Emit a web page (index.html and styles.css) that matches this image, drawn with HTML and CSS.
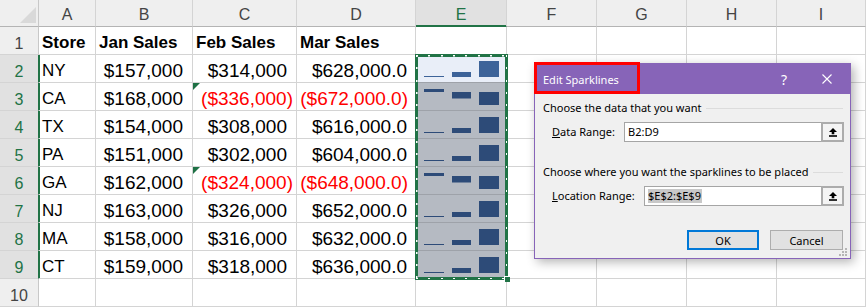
FILE: index.html
```html
<!DOCTYPE html>
<html>
<head>
<meta charset="utf-8">
<title>Edit Sparklines</title>
<link rel="stylesheet" href="styles.css">
</head>
<body>
<div class="app">
  <div class="sheet">
    <div class="corner"><svg width="16" height="16" viewBox="0 0 16 16"><polygon points="16,0 16,16 0,16" fill="#d9d9d9"/></svg></div>
    <div class="ch">A</div><div class="ch">B</div><div class="ch">C</div><div class="ch">D</div><div class="ch on">E</div><div class="ch">F</div><div class="ch">G</div><div class="ch">H</div><div class="ch">I</div>

    <div class="rh">1</div>
    <div class="c h">Store</div><div class="c h">Jan Sales</div><div class="c h">Feb Sales</div><div class="c h">Mar Sales</div>
    <div class="c"></div><div class="c"></div><div class="c"></div><div class="c"></div><div class="c"></div>

    <div class="rh on">2</div>
    <div class="c">NY</div><div class="c n pb">$157,000</div><div class="c n pc">$314,000</div><div class="c n pd">$628,000.0</div>
    <div class="c sp act"><svg width="90" height="27" viewBox="0 0 90 27"><g fill="#3d6399"><rect x="8" y="21" width="20" height="1"/><rect x="36" y="17" width="19" height="5"/><rect x="63" y="6" width="20" height="16"/></g></svg></div>
    <div class="c"></div><div class="c"></div><div class="c"></div><div class="c"></div>

    <div class="rh on">3</div>
    <div class="c">CA</div><div class="c n pb">$168,000</div><div class="c n pcn neg err">($336,000)</div><div class="c n pdn neg">($672,000.0)</div>
    <div class="c sp"><svg width="90" height="27" viewBox="0 0 90 27"><g fill="#2d4b78"><rect x="8" y="6" width="20" height="3"/><rect x="36" y="9" width="19" height="6.5"/><rect x="63" y="9" width="20" height="13"/></g></svg></div>
    <div class="c"></div><div class="c"></div><div class="c"></div><div class="c"></div>

    <div class="rh on">4</div>
    <div class="c">TX</div><div class="c n pb">$154,000</div><div class="c n pc">$308,000</div><div class="c n pd">$616,000.0</div>
    <div class="c sp"><svg width="90" height="27" viewBox="0 0 90 27"><g fill="#2d4b78"><rect x="8" y="21" width="20" height="1"/><rect x="36" y="17" width="19" height="5"/><rect x="63" y="6" width="20" height="16"/></g></svg></div>
    <div class="c"></div><div class="c"></div><div class="c"></div><div class="c"></div>

    <div class="rh on">5</div>
    <div class="c">PA</div><div class="c n pb">$151,000</div><div class="c n pc">$302,000</div><div class="c n pd">$604,000.0</div>
    <div class="c sp"><svg width="90" height="27" viewBox="0 0 90 27"><g fill="#2d4b78"><rect x="8" y="21" width="20" height="1"/><rect x="36" y="17" width="19" height="5"/><rect x="63" y="6" width="20" height="16"/></g></svg></div>
    <div class="c"></div><div class="c"></div><div class="c"></div><div class="c"></div>

    <div class="rh on">6</div>
    <div class="c">GA</div><div class="c n pb">$162,000</div><div class="c n pcn neg err">($324,000)</div><div class="c n pdn neg">($648,000.0)</div>
    <div class="c sp"><svg width="90" height="27" viewBox="0 0 90 27"><g fill="#2d4b78"><rect x="8" y="6" width="20" height="3"/><rect x="36" y="9" width="19" height="6.5"/><rect x="63" y="9" width="20" height="13"/></g></svg></div>
    <div class="c"></div><div class="c"></div><div class="c"></div><div class="c"></div>

    <div class="rh on">7</div>
    <div class="c">NJ</div><div class="c n pb">$163,000</div><div class="c n pc">$326,000</div><div class="c n pd">$652,000.0</div>
    <div class="c sp"><svg width="90" height="27" viewBox="0 0 90 27"><g fill="#2d4b78"><rect x="8" y="21" width="20" height="1"/><rect x="36" y="17" width="19" height="5"/><rect x="63" y="6" width="20" height="16"/></g></svg></div>
    <div class="c"></div><div class="c"></div><div class="c"></div><div class="c"></div>

    <div class="rh on">8</div>
    <div class="c">MA</div><div class="c n pb">$158,000</div><div class="c n pc">$316,000</div><div class="c n pd">$632,000.0</div>
    <div class="c sp"><svg width="90" height="27" viewBox="0 0 90 27"><g fill="#2d4b78"><rect x="8" y="21" width="20" height="1"/><rect x="36" y="17" width="19" height="5"/><rect x="63" y="6" width="20" height="16"/></g></svg></div>
    <div class="c"></div><div class="c"></div><div class="c"></div><div class="c"></div>

    <div class="rh on">9</div>
    <div class="c">CT</div><div class="c n pb">$159,000</div><div class="c n pc">$318,000</div><div class="c n pd">$636,000.0</div>
    <div class="c sp"><svg width="90" height="27" viewBox="0 0 90 27"><g fill="#2d4b78"><rect x="8" y="21" width="20" height="1"/><rect x="36" y="17" width="19" height="5"/><rect x="63" y="6" width="20" height="16"/></g></svg></div>
    <div class="c"></div><div class="c"></div><div class="c"></div><div class="c"></div>

    <div class="rh">10</div>
    <div class="c"></div><div class="c"></div><div class="c"></div><div class="c"></div><div class="c"></div><div class="c"></div><div class="c"></div><div class="c"></div><div class="c"></div>
  </div>

  <div class="marquee"><span class="handle"></span></div>

  <div class="dlg">
    <div class="dlg-title">
      <span class="tt">Edit Sparklines</span>
      <span class="q">?</span>
      <svg class="x" width="10" height="10" viewBox="0 0 10 10"><path d="M0.5 0.5L9.5 9.5M9.5 0.5L0.5 9.5" stroke="#fff" stroke-width="1.1" fill="none"/></svg>
    </div>
    <div class="dlg-body">
      <div class="sec"><span>Choose the data that you want</span><i class="rule"></i></div>
      <div class="field">
        <span class="lbl"><u>D</u>ata Range:</span>
        <div class="inp w1"><span class="val">B2:D9</span><span class="pick"><svg width="10" height="9" viewBox="0 0 10 9"><path d="M5 0L9 4H6.3V6.3H3.7V4H1Z" fill="#000"/><rect x="1" y="7.2" width="8" height="1.6" fill="#000"/></svg></span></div>
      </div>
      <div class="sec sec2"><span>Choose where you want the sparklines to be placed</span><i class="rule"></i></div>
      <div class="field">
        <span class="lbl"><u>L</u>ocation Range:</span>
        <div class="inp w2"><span class="val"><span class="hl">$E$2:$E$9</span></span><span class="pick"><svg width="10" height="9" viewBox="0 0 10 9"><path d="M5 0L9 4H6.3V6.3H3.7V4H1Z" fill="#000"/><rect x="1" y="7.2" width="8" height="1.6" fill="#000"/></svg></span></div>
      </div>
      <div class="btns">
        <button class="btn ok">OK</button>
        <button class="btn">Cancel</button>
      </div>
      <svg class="grip" width="8" height="8" viewBox="0 0 8 8"><g fill="#b5b5b5"><rect x="6" y="0" width="2" height="2"/><rect x="3" y="3" width="2" height="2"/><rect x="6" y="3" width="2" height="2"/><rect x="0" y="6" width="2" height="2"/><rect x="3" y="6" width="2" height="2"/><rect x="6" y="6" width="2" height="2"/></g></svg>
    </div>
    <div class="redbox"></div>
  </div>
</div>
</body>
</html>
```

FILE: styles.css
```css
* { box-sizing: border-box; margin: 0; padding: 0; }
html, body { width: 866px; height: 308px; overflow: hidden; background: #fff; }
body { font-family: "Liberation Sans", Arial, sans-serif; color: #000; }

.app { position: relative; width: 866px; height: 308px; }

.sheet {
  display: grid;
  grid-template-columns: 39px 57px 97px 104px 119px 91px 90px 90px 90px 89px;
  grid-template-rows: 27px repeat(10, 28px);
}

.corner {
  background: #efefef;
  border-right: 1px solid #c8c8c8;
  border-bottom: 1px solid #b4b4b4;
  display: flex;
  align-items: flex-end;
  justify-content: flex-end;
  padding: 0 2px 3px 0;
}
.corner svg { display: block; }

.ch {
  background: #efefef;
  border-right: 1px solid #d4d4d4;
  border-bottom: 1px solid #b4b4b4;
  font-size: 16px;
  line-height: 20px;
  color: #444;
  display: flex;
  justify-content: center;
  align-items: center;
  padding-top: 3px;
}
.ch.on {
  background: #e1e1e1;
  color: #217346;
  border-bottom-color: #217346;
  box-shadow: inset 0 -1px 0 #217346;
}

.rh {
  background: #efefef;
  border-right: 1px solid #c8c8c8;
  border-bottom: 1px solid #d4d4d4;
  font-size: 16px;
  line-height: 20px;
  color: #444;
  display: flex;
  justify-content: center;
  align-items: flex-end;
}
.rh.on {
  background: #e1e1e1;
  color: #217346;
  border-right-color: #217346;
  box-shadow: 1px 0 0 #217346;
}

.c {
  position: relative;
  border-right: 1px solid #d4d4d4;
  border-bottom: 1px solid #d4d4d4;
  display: flex;
  align-items: flex-end;
  padding: 0 0 1px 3px;
  font-size: 17px;
  line-height: 20px;
  white-space: nowrap;
}
.c.h { font-weight: bold; }
.c.n { font-size: 19px; justify-content: flex-end; padding-left: 0; }
.pb { padding-right: 9px; }
.pc { padding-right: 9px; }
.pcn { padding-right: 3px; }
.pd { padding-right: 8px; }
.pdn { padding-right: 7px; }
.neg { color: #ff0000; }
.err::before {
  content: "";
  position: absolute;
  left: 0;
  top: 0;
  border-top: 7px solid #1e7145;
  border-right: 7px solid transparent;
}

.c.sp {
  display: block;
  padding: 0;
  background: #b5bac2;
  border-bottom-color: #9ea2a9;
}
.c.sp.act { background: #e9eef8; }
.c.sp svg { display: block; }

.marquee {
  position: absolute;
  left: 415px;
  top: 54px;
  width: 93px;
  height: 226px;
  border: 3px solid #217346;
  pointer-events: none;
}
.marquee::before {
  content: "";
  position: absolute;
  left: -2px;
  top: -2px;
  right: -2px;
  bottom: -2px;
  background:
    repeating-linear-gradient(90deg, #fff 0 2px, transparent 2px 12.3px) 0 0 / 100% 1.5px no-repeat,
    repeating-linear-gradient(90deg, #fff 0 2px, transparent 2px 12.3px) 0 100% / 100% 1.5px no-repeat,
    repeating-linear-gradient(180deg, #fff 0 2px, transparent 2px 12.3px) 0 0 / 1.5px 100% no-repeat,
    repeating-linear-gradient(180deg, #fff 0 2px, transparent 2px 12.3px) 100% 0 / 1.5px 100% no-repeat;
}
.handle {
  position: absolute;
  right: -5px;
  bottom: -5px;
  width: 6px;
  height: 6px;
  background: #217346;
  border-top: 1px solid #fff;
  border-left: 1px solid #fff;
}

/* dialog */
.dlg {
  position: absolute;
  left: 534px;
  top: 63px;
  width: 317px;
  height: 196px;
  display: flex;
  flex-direction: column;
  font-family: "Noto Sans", "Open Sans", sans-serif;
  font-size: 11px;
  color: #000;
  box-shadow: 3px 3px 10px rgba(0, 0, 0, 0.3);
}
.dlg-title {
  flex: none;
  height: 31px;
  background: #8764b8;
  color: #fff;
  display: flex;
  align-items: center;
  padding: 1px 0 0 9px;
}
.tt { flex: 1; font-size: 11px; }
.q { font-size: 14px; margin-right: 35px; }
.x { display: block; margin-right: 19px; }

.dlg-body {
  position: relative;
  flex: 1;
  background: #f0f0f0;
  border: 1px solid #8764b8;
  border-top: 0;
  padding: 6px 7px 0 8px;
}
.sec {
  display: flex;
  align-items: center;
  height: 16px;
  line-height: 16px;
}
.sec2 { margin-top: 22px; }
.rule {
  flex: 1;
  height: 1px;
  background: #dcdcdc;
  margin-left: 5px;
}
.field {
  display: flex;
  align-items: center;
  height: 20px;
  margin-top: 6px;
  padding-left: 9px;
}
.lbl { flex: 1; line-height: 16px; }
.inp {
  display: flex;
  height: 20px;
  background: #fff;
  border: 1px solid #a5a5a5;
  margin-right: -1px;
}
.w1 { width: 220px; }
.w2 { width: 200px; }
.val {
  flex: 1;
  padding-left: 3px;
  line-height: 18px;
  display: flex;
  align-items: center;
}
.hl {
  background: #c8c8c8;
  line-height: 14px;
  padding: 0 1px 0 0;
}
.pick {
  width: 23px;
  margin: -1px -1px -1px 0;
  border: 2px solid #acacac;
  background: #f4f4f4;
  display: flex;
  align-items: center;
  justify-content: center;
}
.pick svg { display: block; }

.btns {
  display: flex;
  justify-content: flex-end;
  gap: 11px;
  margin-top: 24px;
}
.btn {
  height: 20px;
  width: 73px;
  background: #e1e1e1;
  border: 1px solid #adadad;
  font-family: "Noto Sans", "Open Sans", sans-serif;
  font-size: 11px;
  color: #000;
}
.btn.ok { width: 72px; border: 2px solid #0078d7; }

.grip {
  position: absolute;
  right: 3px;
  bottom: 2px;
  display: block;
}

.redbox {
  position: absolute;
  left: 0;
  top: -1px;
  width: 106px;
  height: 32px;
  border: 3px solid #ff0000;
}
```
